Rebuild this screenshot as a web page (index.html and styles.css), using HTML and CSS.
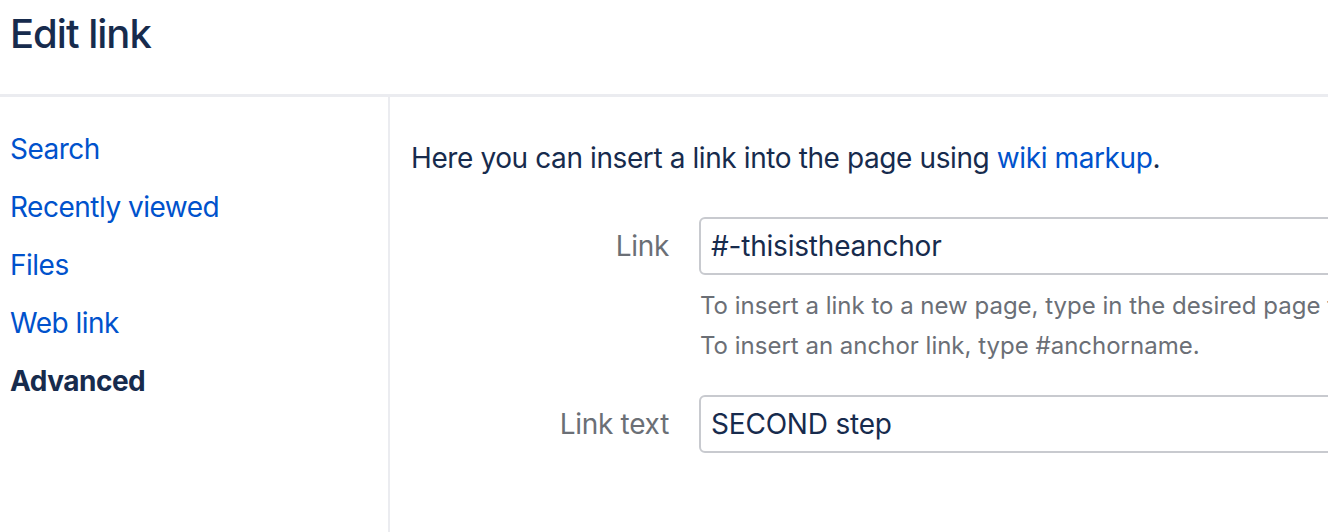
FILE: index.html
```html
<!DOCTYPE html>
<html lang="en">
<head>
<meta charset="utf-8">
<title>Edit link</title>
<link rel="stylesheet" href="styles.css">
</head>
<body>
<div class="dialog">
  <header class="dialog-header">
    <h1 class="dialog-title">Edit link</h1>
  </header>
  <div class="dialog-body">
    <nav class="sidebar">
      <a class="nav-item" href="#">Search</a>
      <a class="nav-item" href="#">Recently viewed</a>
      <a class="nav-item" href="#">Files</a>
      <a class="nav-item" href="#">Web link</a>
      <span class="nav-item nav-item-active">Advanced</span>
    </nav>
    <main class="panel">
      <p class="intro">Here you can insert a link into the page using <a class="link" href="#">wiki markup</a>.</p>
      <div class="form">
        <div class="field">
          <label class="field-label" for="link">Link</label>
          <input class="field-input" id="link" type="text" value="#-thisistheanchor">
        </div>
        <div class="help">
          <div>To insert a link to a new page, type in the desired page title.</div>
          <div>To insert an anchor link, type #anchorname.</div>
        </div>
        <div class="field field-text">
          <label class="field-label" for="linktext">Link text</label>
          <input class="field-input" id="linktext" type="text" value="SECOND step">
        </div>
      </div>
    </main>
  </div>
</div>
</body>
</html>
```
FILE: styles.css
```css
html, body {
  margin: 0;
  padding: 0;
  background: #ffffff;
  overflow: hidden;
}

body {
  font-family: Inter, "Noto Sans", "Liberation Sans", sans-serif;
  color: #172b4d;
  width: 1328px;
  height: 532px;
}

.dialog {
  display: flex;
  flex-direction: column;
  height: 532px;
  overflow: hidden;
}

.dialog-header {
  height: 97px;
  box-sizing: border-box;
  padding: 10px 0 0 10px;
  border-bottom: 3px solid #ebecf0;
}

.dialog-title {
  margin: 0;
  font-size: 40px;
  line-height: 48px;
  font-weight: 500;
  color: #172b4d;
  letter-spacing: -1px;
}

.dialog-body {
  display: flex;
  flex: 1;
  min-height: 0;
}

.sidebar {
  width: 388px;
  flex: none;
  border-right: 2px solid #ebecf0;
  padding-top: 23px;
  display: flex;
  flex-direction: column;
}

.nav-item {
  display: block;
  padding-left: 10px;
  font-size: 28px;
  line-height: 58px;
  letter-spacing: -0.5px;
  color: #0052cc;
  text-decoration: none;
}

.nav-item-active {
  color: #172b4d;
  font-weight: 700;
}

.panel {
  flex: 1;
  padding: 41px 0 0 21px;
  min-width: 0;
  overflow: hidden;
}

.intro {
  margin: 0;
  font-size: 28px;
  line-height: 40px;
  letter-spacing: -0.4px;
  color: #172b4d;
  white-space: nowrap;
}

.link {
  color: #0052cc;
  text-decoration: none;
}

.form {
  margin-top: 39px;
}

.field {
  display: flex;
  align-items: center;
  gap: 30px;
}

.field-label {
  width: 258px;
  flex: none;
  text-align: right;
  font-size: 28px;
  line-height: 40px;
  letter-spacing: -0.3px;
  color: #6b6f76;
}

.field-input {
  width: 900px;
  flex: none;
  height: 58px;
  box-sizing: border-box;
  border: 2px solid #c8cacf;
  border-radius: 6px;
  padding: 0 10px;
  font-family: inherit;
  font-size: 28px;
  letter-spacing: -0.2px;
  color: #172b4d;
  background: #ffffff;
  outline: none;
}

.help {
  margin: 11px 0 0 289px;
  font-size: 24px;
  line-height: 39.5px;
  color: #6b6f76;
  white-space: nowrap;
}

.field-text {
  margin-top: 30px;
}
```
